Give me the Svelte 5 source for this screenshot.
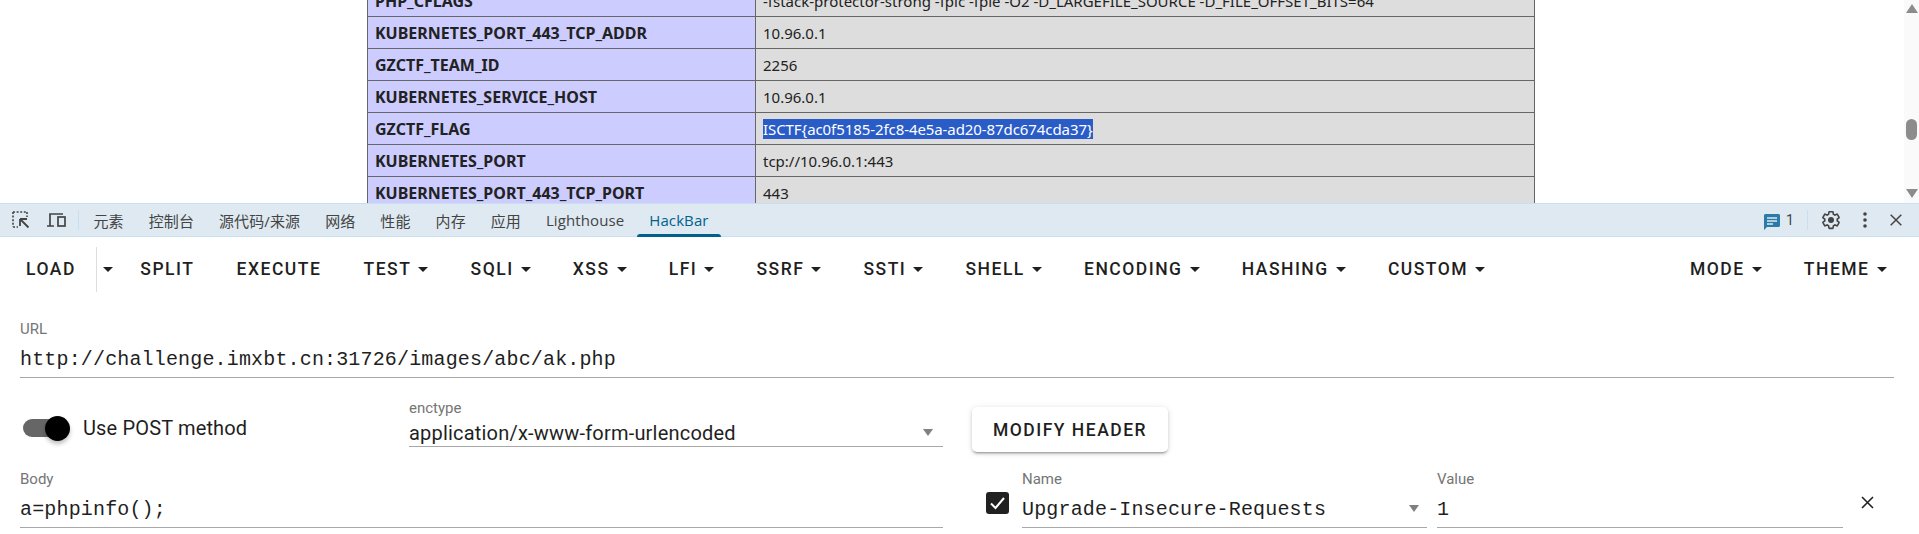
<script>
	const rows = [
		['PHP_CFLAGS', '-fstack-protector-strong -fpic -fpie -O2 -D_LARGEFILE_SOURCE -D_FILE_OFFSET_BITS=64'],
		['KUBERNETES_PORT_443_TCP_ADDR', '10.96.0.1'],
		['GZCTF_TEAM_ID', '2256'],
		['KUBERNETES_SERVICE_HOST', '10.96.0.1'],
		['GZCTF_FLAG', 'ISCTF{ac0f5185-2fc8-4e5a-ad20-87dc674cda37}', true],
		['KUBERNETES_PORT', 'tcp://10.96.0.1:443'],
		['KUBERNETES_PORT_443_TCP_PORT', '443']
	];

	const tabs = ['元素', '控制台', '源代码/来源', '网络', '性能', '内存', '应用', 'Lighthouse', 'HackBar'];

	const menus = [
		['SPLIT', false],
		['EXECUTE', false],
		['TEST', true],
		['SQLI', true],
		['XSS', true],
		['LFI', true],
		['SSRF', true],
		['SSTI', true],
		['SHELL', true],
		['ENCODING', true],
		['HASHING', true],
		['CUSTOM', true]
	];
</script>

<div class="page">
	<section class="viewport">
		<div class="content">
			<table>
				<tbody>
					{#each rows as [name, value, selected]}
						<tr>
							<td class="key">{name}</td>
							<td class="val">
								{#if selected}<span class="sel">{value}</span>{:else}{value}{/if}
							</td>
						</tr>
					{/each}
				</tbody>
			</table>
		</div>
		<div class="scrollbar">
			<i class="up"></i>
			<b></b>
			<i class="down"></i>
		</div>
	</section>

	<nav class="tabbar">
		<svg class="ico inspect" width="18" height="18" viewBox="0 0 18 18">
			<path d="M1 1h14M1 1v15M1 16h5M15 1v5" stroke="#444" stroke-width="1.6" stroke-dasharray="2 1.6" fill="none" />
			<path d="M8 8h7M8 8v7M8.5 8.5 16.5 16.5" stroke="#444" stroke-width="1.8" fill="none" />
		</svg>
		<svg class="ico device" width="20" height="16" viewBox="0 0 20 16">
			<path d="M1 14h7M4 14V2h13" stroke="#444" stroke-width="1.7" fill="none" />
			<rect x="12" y="5" width="7" height="9" stroke="#444" stroke-width="1.7" fill="none" />
		</svg>
		<span class="sep"></span>
		{#each tabs as tab}
			<span class="tab" class:active={tab === 'HackBar'}>{tab}</span>
		{/each}
		<span class="spacer"></span>
		<svg class="comment" width="16" height="16" viewBox="0 0 16 16">
			<path d="M0 1.5C0 .7.7 0 1.5 0h13c.8 0 1.5.7 1.5 1.5v10c0 .8-.7 1.5-1.5 1.5H3l-3 3z" fill="#2b7ba8" />
			<path d="M3 4h10M3 7h10M3 10h6" stroke="#dee9f2" stroke-width="1.4" />
		</svg>
		<span class="count">1</span>
		<span class="sep tools"></span>
		<svg class="gear" width="20" height="20" viewBox="0 0 24 24">
			<path d="M19.43 12.98c.04-.32.07-.64.07-.98s-.03-.66-.07-.98l2.11-1.65c.19-.15.24-.42.12-.64l-2-3.46c-.12-.22-.39-.3-.61-.22l-2.49 1c-.52-.4-1.08-.73-1.69-.98l-.38-2.65C14.46 2.18 14.25 2 14 2h-4c-.25 0-.46.18-.49.42l-.38 2.65c-.61.25-1.17.59-1.69.98l-2.49-1c-.23-.09-.49 0-.61.22l-2 3.46c-.13.22-.07.49.12.64l2.11 1.65c-.04.32-.07.65-.07.98s.03.66.07.98l-2.11 1.65c-.19.15-.24.42-.12.64l2 3.46c.12.22.39.3.61.22l2.49-1c.52.4 1.08.73 1.69.98l.38 2.65c.03.24.24.42.49.42h4c.25 0 .46-.18.49-.42l.38-2.65c.61-.25 1.17-.59 1.69-.98l2.49 1c.23.09.49 0 .61-.22l2-3.46c.12-.22.07-.49-.12-.64l-2.11-1.65z" fill="none" stroke="#444" stroke-width="1.9" />
			<circle cx="12" cy="12" r="3.6" fill="#444" />
		</svg>
		<svg class="kebab" width="4" height="16" viewBox="0 0 4 16">
			<circle cx="2" cy="2" r="1.8" fill="#444" /><circle cx="2" cy="8" r="1.8" fill="#444" /><circle cx="2" cy="14" r="1.8" fill="#444" />
		</svg>
		<svg class="close" width="12" height="12" viewBox="0 0 12 12">
			<path d="M.7.7 11.3 11.3M11.3.7.7 11.3" stroke="#444" stroke-width="1.5" />
		</svg>
	</nav>

	<div class="menubar">
		<button class="btn load">LOAD</button>
		<button class="btn more" aria-label="more"><span class="caret"></span></button>
		{#each menus as [label, hasCaret]}
			<button class="btn">{label}{#if hasCaret}<span class="caret"></span>{/if}</button>
		{/each}
		<span class="spacer"></span>
		<button class="btn">MODE<span class="caret"></span></button>
		<button class="btn">THEME<span class="caret"></span></button>
	</div>

	<div class="form">
		<div class="field url">
			<span class="label">URL</span>
			<div class="input mono">http://challenge.imxbt.cn:31726/images/abc/ak.php</div>
		</div>

		<div class="grid">
			<div class="left">
				<div class="options">
					<div class="switch">
						<span class="track"><span class="thumb"></span></span>
						<span class="switch-label">Use POST method</span>
					</div>
					<div class="field enctype">
						<span class="label">enctype</span>
						<div class="input plain">application/x-www-form-urlencoded<span class="arrow"></span></div>
					</div>
				</div>
				<div class="field body">
					<span class="label">Body</span>
					<div class="input mono">a=phpinfo();</div>
				</div>
			</div>

			<div class="headers">
				<button class="modify">MODIFY HEADER</button>
				<div class="header-row">
					<span class="check">
						<svg width="23" height="22" viewBox="0 0 23 22">
							<path d="M5 11.5 9.5 16 18 6" stroke="#fff" stroke-width="2" fill="none" />
						</svg>
					</span>
					<div class="field name">
						<span class="label">Name</span>
						<div class="input mono">Upgrade-Insecure-Requests<span class="arrow"></span></div>
					</div>
					<div class="field value">
						<span class="label">Value</span>
						<div class="input mono">1</div>
					</div>
					<svg class="remove" width="13" height="13" viewBox="0 0 13 13">
						<path d="M1 1 12 12M12 1 1 12" stroke="#222" stroke-width="1.6" />
					</svg>
				</div>
			</div>
		</div>
	</div>
</div>

<style>
	:global(body) {
		margin: 0;
		background: #fff;
		overflow: hidden;
	}

	.page {
		width: 1919px;
		height: 534px;
		overflow: hidden;
		font-family: Roboto, sans-serif;
		color: #1f1f1f;
	}

	.viewport {
		display: flex;
		height: 203px;
		overflow: hidden;
	}

	.content {
		flex: 1;
		padding-left: 367px;
	}

	table {
		width: 1168px;
		margin-top: -16px;
		border-collapse: collapse;
		font-family: "Noto Sans", sans-serif;
		font-size: 15px;
		color: #222;
	}

	td {
		height: 31px;
		padding: 0 7px;
		border: 1px solid #666;
		white-space: nowrap;
	}

	.key {
		width: 373px;
		background: #ccf;
		font-size: 16px;
		font-weight: bold;
	}

	.val {
		background: #ddd;
	}

	.sel {
		display: inline-block;
		background: #2a5cc8;
		color: #fff;
		line-height: 20px;
		letter-spacing: -0.08px;
	}

	.scrollbar {
		position: relative;
		width: 15px;
		background: #fafafa;
	}

	.scrollbar b {
		position: absolute;
		top: 119px;
		left: 2px;
		width: 11px;
		height: 21px;
		border-radius: 6px;
		background: #8c8c8c;
	}

	.scrollbar i {
		position: absolute;
		left: 2px;
		border-left: 6px solid transparent;
		border-right: 6px solid transparent;
	}

	.up {
		top: 4px;
		border-bottom: 9px solid #8c8c8c;
	}

	.down {
		top: 189px;
		border-top: 9px solid #8c8c8c;
	}

	.tabbar {
		display: flex;
		align-items: center;
		box-sizing: border-box;
		height: 34px;
		background: #dee9f2;
		border-top: 1px solid #c8dff0;
		border-bottom: 1px solid #c8dff0;
		font-family: "Open Sans", "Noto Sans CJK SC", sans-serif;
		font-size: 15px;
		letter-spacing: 0.1px;
		color: #444;
	}

	.ico.inspect {
		margin-left: 12px;
	}

	.ico.device {
		margin-left: 16px;
	}

	.sep {
		width: 1px;
		height: 20px;
		margin: 0 2px 0 12px;
		background: #c8dff0;
	}

	.tab {
		align-self: stretch;
		display: flex;
		align-items: center;
		padding: 0 12.5px;
		white-space: nowrap;
	}

	.tab.active {
		position: relative;
		color: #00628b;
	}

	.tab.active::after {
		content: '';
		position: absolute;
		left: 0;
		right: 0;
		bottom: -1px;
		height: 3px;
		border-radius: 3px 3px 0 0;
		background: #00628b;
	}

	.spacer {
		flex: 1;
	}

	.comment {
		margin-top: 3px;
	}

	.count {
		margin-left: 6px;
		font-family: Roboto, sans-serif;
		font-size: 14px;
	}

	.sep.tools {
		margin: 0 13px 0 13px;
	}

	.kebab {
		margin-left: 22px;
	}

	.close {
		margin: 0 17px 0 23px;
	}

	.menubar {
		display: flex;
		align-items: center;
		gap: 2.2px;
		box-sizing: border-box;
		height: 62px;
		padding: 2px 12.5px 0 6px;
	}

	.btn {
		display: flex;
		align-items: center;
		height: 45px;
		padding: 0 20px;
		border: 0;
		background: none;
		font: 500 17.5px Roboto, sans-serif;
		letter-spacing: 1.5px;
		color: #1f1f1f;
		white-space: nowrap;
	}

	.btn.load {
		margin-right: -2.2px;
		border-right: 1px solid #ddd;
	}

	.btn.more {
		padding: 0 7px 0 6.5px;
		margin-right: -2.2px;
	}

	.caret {
		width: 0;
		height: 0;
		margin-left: 7px;
		border-left: 5px solid transparent;
		border-right: 5px solid transparent;
		border-top: 5px solid #1f1f1f;
	}

	.more .caret {
		margin-left: 0;
	}

	.form {
		padding: 0 25px 0 20px;
	}

	.field {
		display: flex;
		flex-direction: column;
	}

	.label {
		height: 20px;
		font-size: 15px;
		line-height: 20px;
		color: #757575;
	}

	.input {
		position: relative;
		box-sizing: border-box;
		height: 39px;
		line-height: 42px;
		border-bottom: 1.5px solid #a8a8a8;
		font-size: 20px;
		white-space: nowrap;
	}

	.mono {
		font-family: "Liberation Mono", monospace;
		letter-spacing: 0.16px;
	}

	.url .label {
		margin-top: 20px;
	}

	.grid {
		display: flex;
		gap: 29px;
		margin-top: 29px;
	}

	.left {
		width: 923px;
	}

	.options {
		display: flex;
		align-items: flex-end;
		height: 40px;
	}

	.switch {
		display: flex;
		align-items: center;
		box-sizing: border-box;
		width: 389px;
		height: 40px;
		padding-top: 2px;
	}

	.track {
		position: relative;
		width: 45px;
		height: 18px;
		margin-left: 3px;
		border-radius: 9px;
		background: #666;
	}

	.thumb {
		position: absolute;
		top: -3.5px;
		right: -2px;
		width: 25px;
		height: 25px;
		border-radius: 50%;
		background: #000;
		box-shadow: 0 3px 4px rgba(0, 0, 0, 0.25);
	}

	.switch-label {
		margin-left: 15px;
		font-size: 20px;
		letter-spacing: 0.15px;
	}

	.enctype {
		flex: 1;
	}

	.enctype .label {
		height: 18px;
		line-height: 18px;
	}

	.enctype .input {
		height: 30px;
		line-height: 32px;
		letter-spacing: 0.2px;
	}

	.arrow {
		position: absolute;
		top: 50%;
		right: 10px;
		margin-top: -3px;
		border-left: 5px solid transparent;
		border-right: 5px solid transparent;
		border-top: 7px solid #808080;
	}

	.name .arrow {
		right: 8px;
	}

	.body {
		margin-top: 22px;
	}

	.headers {
		flex: 1;
		display: flex;
		flex-direction: column;
	}

	.modify {
		align-self: flex-start;
		width: 196px;
		height: 45px;
		border: 0;
		border-radius: 5px;
		background: #fff;
		box-shadow: 0 3px 2px -2px rgba(0, 0, 0, 0.25), 0 2px 3px rgba(0, 0, 0, 0.14), 0 1px 6px rgba(0, 0, 0, 0.12);
		font: 500 17.5px Roboto, sans-serif;
		letter-spacing: 1.5px;
		color: #1f1f1f;
	}

	.header-row {
		display: flex;
		align-items: flex-start;
		margin-top: 17px;
		margin-left: 14px;
	}

	.check {
		width: 23px;
		height: 22px;
		margin-top: 23px;
		border-radius: 3px;
		background: #212121;
	}

	.check svg {
		display: block;
	}

	.name {
		width: 405px;
		margin-left: 13px;
	}

	.value {
		width: 406px;
		margin-left: 10px;
	}

	.remove {
		margin: 27px 0 0 18px;
	}
</style>
